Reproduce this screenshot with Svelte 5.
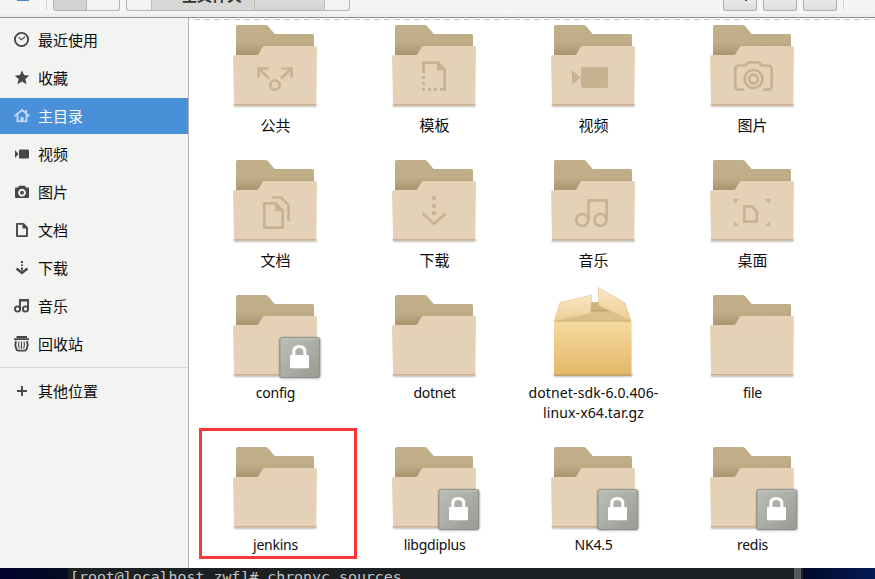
<script>
  // Bookmarks in the sidebar
  const places = [
    { name: "最近使用", icon: "recent" },
    { name: "收藏", icon: "star" },
    { name: "主目录", icon: "home", active: true },
    { name: "视频", icon: "video" },
    { name: "图片", icon: "camera" },
    { name: "文档", icon: "document" },
    { name: "下载", icon: "download" },
    { name: "音乐", icon: "music" },
    { name: "回收站", icon: "trash" },
  ];

  // Content of the home folder
  const files = [
    { name: "公共", emblem: "public" },
    { name: "模板", emblem: "template" },
    { name: "视频", emblem: "video" },
    { name: "图片", emblem: "camera" },
    { name: "文档", emblem: "documents" },
    { name: "下载", emblem: "download" },
    { name: "音乐", emblem: "music" },
    { name: "桌面", emblem: "desktop" },
    { name: "config", latin: true, locked: true },
    { name: "dotnet", latin: true },
    { name: "dotnet-sdk-6.0.406-linux-x64.tar.gz", latin: true, archive: true },
    { name: "file", latin: true },
    { name: "jenkins", latin: true },
    { name: "libgdiplus", latin: true, locked: true },
    { name: "NK4.5", latin: true, locked: true },
    { name: "redis", latin: true, locked: true },
  ];
</script>

<!-- Small 16px icons -->
{#snippet placeIcon(icon)}
  <svg class="place-icon" viewBox="0 0 16 16" width="16" height="16">
    {#if icon === "recent"}
      <circle cx="7.5" cy="7.5" r="6.6" class="line" />
      <path d="M4.7 5.2 7.3 7.7 11 4.8" class="line thin" />
    {:else if icon === "star"}
      <path d="M8 .5 10.100 5.100 15.200 5.700 11.400 9.100 12.500 14.200 8 11.600 3.500 14.200 4.600 9.100 .8 5.700 5.900 5.100z" />
    {:else if icon === "home"}
      <path d="M.6 8.200 8 2 15.400 8.200" class="line" />
      <path d="M3.500 7v6.400h9V7" class="line" />
      <path d="M6.500 9h3.200V13H6.500zM11 2h2v4h-2z" />
    {:else if icon === "video"}
      <path d="M1 4v8l3.500-4z" />
      <rect x="5" y="3.5" width="10" height="9" rx="1" />
    {:else if icon === "camera"}
      <path fill-rule="evenodd" d="M5 1.8h6l1 1.700h2q1 0 1 1V13q0 1-1 1H2q-1 0-1-1V4.500q0-1 1-1h2zM8 4.800a3.900 3.900 0 1 0 .01 0z" />
      <circle cx="8" cy="8.700" r="1.900" />
    {:else if icon === "document"}
      <path d="M3 1.900h6.300L13 5.600v8.500H3z" class="line" stroke-linejoin="round" />
      <path d="M8.500 1.500 13.500 6.500h-5z" />
    {:else if icon === "download"}
      <path d="M7 1h2v2H7zM7 4.500h2v1.600H7zM7 7.500h2v3H7z" />
      <path d="M2.500 8.500 8 13 13.500 8.500" class="line heavy" />
    {:else if icon === "music"}
      <path d="M6 11V2h8v9" class="line" />
      <path d="M5.500 1h9v2.500h-9z" />
      <circle cx="3.500" cy="11" r="2.600" class="line" />
      <circle cx="11.500" cy="11" r="2.600" class="line" />
    {:else if icon === "trash"}
      <path d="M2.500 1h10.500M0 3.100h15" class="line" />
      <path d="M2 5Q.6 8.500 2.200 12.700 2.800 14.600 4.500 14.600h6q1.700 0 2.300-1.900Q14.400 8.500 13 5" class="line" />
      <path d="M5 5.500q-1 3.500.3 7M7.500 5.500v7.500M10 5.500q1 3.500-.3 7" class="line thin" />
    {:else if icon === "plus"}
      <path d="M8 3v10M3 8h10" class="line" />
    {/if}
  </svg>
{/snippet}

<!-- Signs pressed into the folder front -->
{#snippet emblemIcon(emblem)}
  <g class="emblem">
    {#if emblem === "public"}
      <path d="M28.500 55.500V46.500H38.500M29 47 39 56.500M51.500 46.500H61.500V55.500M61 47 51 56.500" />
      <circle cx="45" cy="63" r="4.700" />
    {:else if emblem === "template"}
      <path d="M34.500 51V40.700H49L55.700 47.500V67.500H51" />
      <path d="M48 40V48.500H57z" class="solid" />
      <path d="M33 54h3v3h-3zM33 60h3v3h-3zM33 66h3v3h-3zM39 66h3v3h-3zM45 66h3v3h-3z" class="solid" />
    {:else if emblem === "video"}
      <path d="M24 48v15l8.500-7.500z" class="solid" />
      <rect x="33" y="45" width="27" height="21" rx="2" class="solid" />
    {:else if emblem === "camera"}
      <path d="M37 67.700H32Q28.300 67.700 28.300 64V47.500Q28.300 43.500 32 43.500H37.500Q39.500 43.500 40 41.500 40.500 40.300 42 40.300H51Q52.500 40.300 53 41.500 53.500 43.500 55.500 43.500H61Q64.700 43.500 64.700 47.500V64Q64.700 67.700 61 67.700H56" />
      <circle cx="46.500" cy="57" r="9" />
      <circle cx="46.500" cy="57" r="4.300" />
    {:else if emblem === "documents"}
      <path d="M34.300 46.300H45.500L52.700 53.500V70.700H34.300z" />
      <path d="M45 46v8h8z" class="solid" />
      <path d="M42.300 40.500H51L58.500 48V64" />
    {:else if emblem === "download"}
      <circle cx="45" cy="41" r="2.200" class="solid" />
      <circle cx="45" cy="49" r="2.200" class="solid" />
      <circle cx="45" cy="56" r="2.200" class="solid" />
      <path d="M33.700 56.500 45 66.800 56.700 56.500" />
    {:else if emblem === "music"}
      <path d="M40.500 63V43.300H58.700V63" />
      <circle cx="34.300" cy="63" r="6" />
      <circle cx="52.500" cy="63" r="6" />
    {:else if emblem === "desktop"}
      <path d="M27 42h5l-5 5zM63 42h-5l5 5zM27 69h5l-5-5zM63 69h-5l5-5z" class="solid" />
      <path d="M37.300 49.300H44.500L49.800 54.500V64.700H37.300z" />
    {/if}
  </g>
{/snippet}

<svg class="defs" width="0" height="0">
  <defs>
    <linearGradient id="back" x1="0" y1="0" x2="0" y2="1">
      <stop offset="0" stop-color="#c2b08b" />
      <stop offset=".6" stop-color="#bfad88" />
      <stop offset="1" stop-color="#a8956e" />
    </linearGradient>
    <linearGradient id="front" x1="0" y1="0" x2="0" y2="1">
      <stop offset="0" stop-color="#e4d1b6" />
      <stop offset=".8" stop-color="#e4d2b8" />
      <stop offset="1" stop-color="#e5d0b9" />
    </linearGradient>
    <linearGradient id="badge" x1="0" y1="0" x2="1" y2="1">
      <stop offset="0" stop-color="#bbbeb6" />
      <stop offset=".5" stop-color="#aaaea6" />
      <stop offset="1" stop-color="#969a91" />
    </linearGradient>
    <linearGradient id="box" x1="0" y1="0" x2="0" y2="1">
      <stop offset="0" stop-color="#f5dba0" />
      <stop offset="1" stop-color="#e4b768" />
    </linearGradient>
    <linearGradient id="flap" x1="0" y1="0" x2="0" y2="1">
      <stop offset="0" stop-color="#f9e6c4" />
      <stop offset="1" stop-color="#edcd96" />
    </linearGradient>
  </defs>
</svg>

<div class="window">
  <header>
    <span class="app"></span>
    <span class="divider"></span>
    <div class="buttons">
      <span class="pressed"></span>
      <span></span>
    </div>
    <div class="path">
      <span class="arrow"></span>
      <span class="crumb current"><b>主文件夹</b></span>
      <span class="crumb shaded"></span>
      <span class="arrow"></span>
    </div>
    <div class="tools">
      <span class="tool"><i></i></span>
      <span class="tool"></span>
      <span class="tool"></span>
    </div>
    <span class="divider last"></span>
  </header>

  <div class="body">
    <aside>
      {#each places as place}
        <div class="place" class:active={place.active}>
          {@render placeIcon(place.icon)}
          <span>{place.name}</span>
        </div>
      {/each}
      <hr />
      <div class="place">
        {@render placeIcon("plus")}
        <span>其他位置</span>
      </div>
    </aside>

    <main>
      <div class="scroll-hint"></div>
      <div class="files">
        {#each files as file}
          <div class="file">
            <svg class="file-icon" viewBox="0 0 91 93" width="91" height="93">
              {#if file.archive}
                <rect x="5.500" y="81" width="79" height="3.500" rx="1.500" class="box-shadow" />
                <path d="M12 10.500H77L83 29H6.300z" fill="#dcc08a" />
                <path d="M41 10H60V20H41z" fill="#cfb47d" />
                <path d="M42 18.500H66" stroke="#b99c62" stroke-width=".7" />
                <rect x="6" y="28.500" width="77.600" height="54.800" rx="1" fill="url(#box)" />
                <path d="M6.300 29H83" stroke="#c4a468" stroke-width="1" />
                <path d="M6.500 83H83" stroke="#b98d48" stroke-width="1.200" />
                <path d="M6.300 28.700 12.300 10.500 43.700 3 42.300 21.300z" fill="url(#flap)" stroke="#e3c591" stroke-width=".6" />
                <path d="M50.300-4.500 76.300 10.700 83 28.500 50.700 13.500z" fill="url(#flap)" stroke="#dfc08a" stroke-width=".6" />
              {:else}
                <path d="M6 33V4.500Q6 3 7.500 3H35.500Q37 3 38 4L44.700 12H82.500Q84 12 84 13.500V33z" fill="url(#back)" />
                <path d="M4 82V84.500H86.500V82z" class="folder-shadow" />
                <path d="M3 35Q3 33 5 33H26.300Q27.800 33 28.500 32L32.500 25.300Q33.300 24 34.800 24H85Q87 24 87 26L86.300 82Q86.300 83.500 84.800 83.500H5.500Q4 83.500 4 82z" fill="url(#front)" />
                <path d="M4.300 82.700H86" stroke="#cbb18f" stroke-width="1.400" />
                {@render emblemIcon(file.emblem)}
              {/if}
              {#if file.locked}
                <rect x="49.500" y="45.500" width="41" height="41" rx="2.500" class="badge-shadow" />
                <rect x="49.900" y="45.700" width="39.800" height="39.800" rx="2" fill="url(#badge)" stroke="#8b8f86" stroke-width="1" />
                <path d="M51 46.900H88.500" stroke="#cfd1cb" stroke-width=".8" />
                <path d="M63.800 64V59.500Q63.800 54.500 69.300 54.500T74.800 59.500V64" fill="none" stroke="#fff" stroke-width="3" />
                <rect x="60" y="63" width="19" height="13.300" rx="1" fill="#fff" />
              {/if}
            </svg>
            <div class="name" class:latin={file.latin} class:long={file.archive}>{file.name}</div>
          </div>
        {/each}
      </div>
    </main>
  </div>

  <footer>
    <div class="terminal">[root@localhost zwf]# chronyc sources</div>
    <div class="scrollbar"></div>
  </footer>

  <div class="highlight"></div>
</div>

<style>
  :global(body) {
    background: #fff;
  }

  .window {
    position: relative;
    display: flex;
    flex-direction: column;
    width: 875px;
    height: 579px;
    overflow: hidden;
    color: #0c0c0c;
    font-family: "Noto Sans CJK SC", sans-serif;
    font-size: 15px;
  }

  .defs {
    position: absolute;
  }

  /* Toolbar */
  header {
    display: flex;
    align-items: flex-start;
    flex: none;
    box-sizing: border-box;
    height: 18px;
    background: linear-gradient(#f5f5f4 70%, #ebebea);
    border-bottom: 1px solid #92928c;
  }

  .app {
    width: 12px;
    height: 1px;
    margin-left: 17px;
    background: #4a86cf;
  }

  .divider {
    width: 1px;
    height: 10px;
    margin-left: 17px;
    background: #d8d8d6;
  }

  .divider.last {
    margin-left: 6px;
  }

  .buttons,
  .path {
    display: flex;
    box-sizing: border-box;
    height: 11px;
    border: 1px solid #b4b4b0;
    border-top: none;
    border-radius: 0 0 3px 3px;
    background: #f3f3f2;
    overflow: hidden;
  }

  .buttons {
    width: 67px;
    margin-left: 6px;
  }

  .pressed {
    width: 32px;
    background: #d2d2d0;
    border-right: 1px solid #b4b4b0;
  }

  .path {
    width: 224px;
    margin-left: 6px;
  }

  .arrow {
    width: 24px;
  }

  .crumb {
    position: relative;
    box-sizing: border-box;
    border-left: 1px solid #bdbdb9;
  }

  .crumb.current {
    width: 103px;
    background: #d7d7d5;
    overflow: hidden;
  }

  .crumb b {
    position: absolute;
    left: 30px;
    bottom: 7px;
    color: #2e3436;
    line-height: 16px;
    white-space: nowrap;
  }

  .crumb.shaded {
    width: 71px;
    background: linear-gradient(#dcdcda, #d2d2d0);
    border-right: 1px solid #bdbdb9;
  }

  .tools {
    display: flex;
    gap: 6px;
    margin-left: 373px;
  }

  .tool {
    box-sizing: border-box;
    width: 34px;
    height: 11px;
    border: 1px solid #adada9;
    border-top: none;
    border-radius: 0 0 3px 3px;
    background: linear-gradient(#e9e9e7, #dededc);
  }

  .tool i {
    display: block;
    width: 2px;
    height: 1px;
    margin-left: 21px;
    background: #444;
  }

  .body {
    display: flex;
    height: 550px;
  }

  /* Sidebar */
  aside {
    box-sizing: border-box;
    width: 189px;
    padding-top: 4px;
    background: #f3f3f2;
    border-right: 1px solid #b5b5b2;
  }

  .place {
    display: flex;
    align-items: center;
    height: 36px;
    margin-bottom: 2px;
    padding-left: 14px;
    line-height: 36px;
  }

  .place span {
    margin-left: 8px;
  }

  .place.active {
    background: #4a90d9;
    color: #fff;
  }

  hr {
    height: 1px;
    margin: 5px 0;
    border: none;
    background: #d8d8d6;
  }

  .place-icon {
    fill: #474747;
    stroke: none;
    overflow: visible;
  }

  .active .place-icon {
    fill: #bfd7f2;
  }

  .line {
    fill: none;
    stroke: #474747;
    stroke-width: 1.9;
  }

  .active .line {
    stroke: #bfd7f2;
  }

  .thin {
    stroke-width: 1.1;
  }

  .heavy {
    stroke-width: 2.3;
  }

  /* Icon view */
  main {
    flex: 1;
    background: #fff;
  }

  .scroll-hint {
    height: 1px;
    margin: 1px 0 2px;
    background: repeating-linear-gradient(90deg, #c6c6c4 0 1px, #fff 1px 5px, #c6c6c4 5px 10px);
  }

  .files {
    display: grid;
    grid-template-columns: repeat(4, 159px);
    grid-template-rows: 135px 135px 152px 120px;
    padding-left: 7px;
  }

  .file {
    display: flex;
    flex-direction: column;
    align-items: center;
  }

  .file-icon {
    flex: none;
    overflow: visible;
  }

  .name {
    width: 140px;
    line-height: 20px;
    text-align: center;
  }

  .name.latin {
    margin-top: -2px;
    font-family: "Noto Sans", sans-serif;
    font-size: 14px;
    letter-spacing: -0.25px;
  }

  .name.long {
    letter-spacing: 0.12px;
  }

  .emblem {
    fill: none;
    stroke: #c8b291;
    stroke-width: 2.7;
  }

  .emblem .solid {
    fill: #c8b291;
    stroke: none;
  }

  .folder-shadow,
  .box-shadow,
  .badge-shadow {
    fill: #000;
    opacity: 0.35;
    filter: blur(1px);
  }

  /* Terminal behind the window */
  footer {
    display: flex;
    height: 11px;
    overflow: hidden;
    background: linear-gradient(90deg, #02022c 0, #040c22 68px, #020a2c 804px, #041a52 100%);
  }

  .terminal {
    width: 724px;
    height: 11px;
    margin-left: 68px;
    padding-left: 2px;
    background: #1c2022;
    color: #c4c6c6;
    font: 14.9px/18px "DejaVu Sans Mono", monospace;
    white-space: pre;
  }

  .scrollbar {
    width: 7px;
    background: #55595b;
    border-right: 2px solid #222628;
  }

  /* Red frame round the jenkins folder */
  .highlight {
    position: absolute;
    left: 199px;
    top: 428px;
    box-sizing: border-box;
    width: 158px;
    height: 131px;
    border: 3px solid #fb3737;
  }
</style>
